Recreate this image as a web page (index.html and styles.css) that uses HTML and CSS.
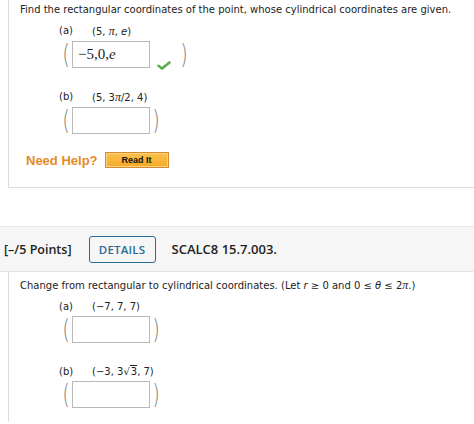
FILE: index.html
```html
<!DOCTYPE html>
<html>
<head>
<meta charset="utf-8">
<link rel="stylesheet" href="styles.css">
</head>
<body>
<div class="card first">
  <p class="prompt">Find the rectangular coordinates of the point, whose cylindrical coordinates are given.</p>
  <div class="part">
    <div class="label"><span class="tag">(a)</span><span class="val">(5, <i class="pi">π</i>, <i>e</i>)</span></div>
    <div class="answer">
      <span class="paren">(</span>
      <span class="box"><span class="mathval">−5,0,<i>e</i></span></span>
      <span class="check"><svg width="14" height="9" viewBox="0 0 14 9"><path d="M1.5 4.8 L5 7.6 L12.5 1.5" fill="none" stroke="#5cae4f" stroke-width="2.6" stroke-linecap="round" stroke-linejoin="round"/></svg></span>
      <span class="paren">)</span>
    </div>
  </div>
  <div class="part partb">
    <div class="label"><span class="tag">(b)</span><span class="val">(5, 3<i class="pi">π</i>/2, 4)</span></div>
    <div class="answer">
      <span class="paren">(</span>
      <span class="box"></span>
      <span class="paren">)</span>
    </div>
  </div>
  <div class="help">
    <span class="need">Need Help?</span>
    <span class="readit">Read It</span>
  </div>
</div>

<div class="header">
  <span class="points">[–/5 Points]</span>
  <span class="details">DETAILS</span>
  <span class="code">SCALC8 15.7.003.</span>
</div>

<div class="card second">
  <p class="prompt">Change from rectangular to cylindrical coordinates. (Let <i>r</i> ≥ 0 and 0 ≤ <i>θ</i> ≤ 2<i class="pi">π</i>.)</p>
  <div class="part">
    <div class="label"><span class="tag">(a)</span><span class="val">(−7, 7, 7)</span></div>
    <div class="answer">
      <span class="paren">(</span>
      <span class="box"></span>
      <span class="paren">)</span>
    </div>
  </div>
  <div class="part partb">
    <div class="label"><span class="tag">(b)</span><span class="val">(−3, 3<span class="sqrt">√<span class="rad">3</span></span>, 7)</span></div>
    <div class="answer">
      <span class="paren">(</span>
      <span class="box"></span>
      <span class="paren">)</span>
    </div>
  </div>
</div>
</body>
</html>
```
FILE: styles.css
```css
html, body {
  margin: 0;
  padding: 0;
  background: #fff;
}
body {
  font-family: "DejaVu Sans", Verdana, sans-serif;
  font-size: 10px;
  color: #222;
  width: 474px;
  height: 424px;
  overflow: hidden;
}
.card {
  margin-left: 8px;
  border-left: 1px solid #dcdcdc;
  padding-left: 11px;
}
.first {
  height: 188px;
  border-bottom: 1px solid #dcdcdc;
  box-sizing: border-box;
  padding-top: 3px;
}
.prompt {
  margin: 0;
  line-height: 14px;
  white-space: nowrap;
}
.part {
  padding-left: 39px;
  margin-top: 7px;
}
.label {
  line-height: 14px;
  display: flex;
}
.tag {
  width: 33px;
}
.pi {
  font-family: "Liberation Serif", serif;
  font-style: italic;
  font-size: 12px;
}
.answer {
  display: flex;
  align-items: center;
  margin-top: 1px;
  margin-left: 1px;
  height: 28px;
}
.paren {
  font-family: "DejaVu Sans", sans-serif;
  font-weight: 200;
  font-size: 26px;
  line-height: 28px;
  color: #777;
  transform: scaleX(0.7);
  width: 12px;
  text-align: center;
}
.box {
  width: 76px;
  height: 25px;
  border: 1px solid #b9b9b9;
  background: #fff;
  display: flex;
  align-items: center;
}
.mathval {
  font-family: "Liberation Serif", serif;
  font-size: 15px;
  color: #222;
  padding-left: 5px;
}
.check {
  width: 28px;
  align-self: flex-end;
  display: flex;
  justify-content: center;
  margin-bottom: -2px;
}
.partb {
  margin-top: 22px;
}
.help {
  display: flex;
  align-items: center;
  margin-top: 18px;
  padding-left: 6px;
}
.need {
  font-family: "Liberation Sans", Arial, sans-serif;
  font-weight: bold;
  font-size: 13px;
  color: #e68a24;
}
.readit {
  margin-left: 7px;
  width: 62px;
  height: 14px;
  border: 1px solid #d88a2a;
  background: linear-gradient(#fbc24f, #f6a823);
  box-shadow: inset 0 0 0 1px #fcd58a;
  font-family: "Liberation Sans", Arial, sans-serif;
  font-weight: bold;
  font-size: 9px;
  line-height: 14px;
  text-align: center;
  color: #111;
}
.header {
  margin-top: 38px;
  height: 44px;
  background: #f6f6f6;
  border-top: 1px solid #ebebeb;
  border-bottom: 1px solid #e4e4e4;
  display: flex;
  align-items: center;
  padding-left: 4px;
  font-family: "Open Sans", sans-serif;
  font-size: 13px;
  font-weight: 600;
  color: #222;
}
.points {
  font-size: 12.5px;
}
.details {
  margin-left: 17px;
  border: 1.5px solid #2b6a92;
  border-radius: 3px;
  color: #2b6a92;
  font-size: 11.5px;
  font-weight: 600;
  width: 65px;
  height: 25px;
  display: flex;
  align-items: center;
  justify-content: center;
  letter-spacing: 0.2px;
}
.code {
  margin-left: 16px;
  font-size: 13px;
}
.second {
  padding-top: 6px;
  height: 150px;
  box-sizing: border-box;
}
.sqrt {
  display: inline-block;
}
.rad {
  border-top: 1px solid #222;
  padding-left: 1px;
}
```
